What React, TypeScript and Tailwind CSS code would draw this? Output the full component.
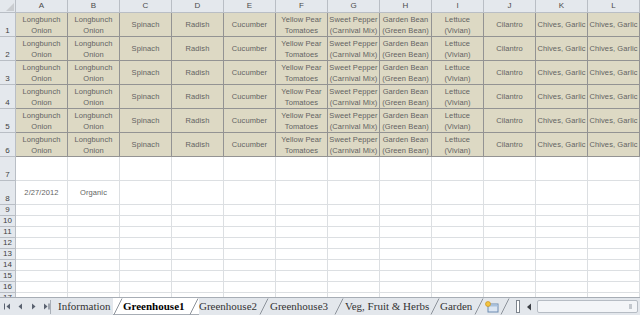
import React from "react";

const cols = ["A", "B", "C", "D", "E", "F", "G", "H", "I", "J", "K", "L"];
const plantRow: string[][] = [
  ["Longbunch", "Onion"],
  ["Longbunch", "Onion"],
  ["Spinach"],
  ["Radish"],
  ["Cucumber"],
  ["Yellow Pear", "Tomatoes"],
  ["Sweet Pepper", "(Carnival Mix)"],
  ["Garden Bean", "(Green Bean)"],
  ["Lettuce", "(Vivian)"],
  ["Cilantro"],
  ["Chives, Garlic"],
  ["Chives, Garlic"],
];

const rows: { n: number; h: string; filled: boolean; content?: string[][] }[] = [];
for (let i = 1; i <= 6; i++) rows.push({ n: i, h: "h-[24px]", filled: true, content: plantRow });
rows.push({ n: 7, h: "h-[24px]", filled: false });
rows.push({
  n: 8,
  h: "h-[24px]",
  filled: false,
  content: [["2/27/2012"], ["Organic"], [], [], [], [], [], [], [], [], [], []],
});
for (let i = 9; i <= 17; i++) rows.push({ n: i, h: "h-[11px]", filled: false });

function Slash() {
  return (
    <svg width="10" height="17" viewBox="0 0 10 17" className="shrink-0">
      <line x1="1" y1="16.5" x2="9" y2="0.5" stroke="#8d939b" strokeWidth="1" />
    </svg>
  );
}

export default function App() {
  return (
    <div
      className="w-[640px] h-[315px] overflow-hidden bg-white flex flex-col"
      style={{ fontFamily: '"Liberation Sans", Arial, sans-serif' }}
    >
      <div className="h-[297px] overflow-hidden">
        {/* header row */}
        <div className="flex h-[13px]">
          <div className="w-[16px] h-full bg-[#e4e8ed] border-r border-b border-[#b9bec5] relative">
            <svg width="8" height="8" viewBox="0 0 8 8" className="absolute right-[1px] bottom-[1px]">
              <polygon points="8,0 8,8 0,8" fill="#c9ccd0" />
            </svg>
          </div>
          {cols.map((c) => (
            <div
              key={c}
              className="w-[52px] h-full bg-[#e4e8ed] border-r border-b border-[#b9bec5] flex items-center justify-center text-[8px] text-[#4b4b4b] leading-none"
            >
              {c}
            </div>
          ))}
        </div>
        {rows.map((r) => (
          <div key={r.n} className={`flex ${r.h}`}>
            <div className="w-[16px] h-full bg-[#e4e8ed] border-r border-b border-[#b9bec5] flex items-end justify-center pb-[1px] text-[8px] text-[#3f3f3f] leading-none">
              {r.n}
            </div>
            {cols.map((c, ci) => {
              const lines = r.content ? r.content[ci] : [];
              return (
                <div
                  key={c}
                  className={`w-[52px] h-full border-r border-b flex flex-col items-center justify-center text-[7.5px] leading-[11px] text-[#636363] whitespace-nowrap tracking-[0.1px] ${
                    r.filled ? "bg-[#ddd9c4] border-[#939393]" : "bg-white border-[#dcdfe2]"
                  }`}
                >
                  {lines && lines.map((l, i) => <span key={i}>{l}</span>)}
                </div>
              );
            })}
          </div>
        ))}
      </div>
      {/* tab bar */}
      <div
        className="h-[18px] flex items-center bg-[#e3e7ec] border-t border-[#a7adb5] text-[#333]"
        style={{ fontFamily: '"Liberation Serif", "Times New Roman", serif' }}
      >
        <div className="w-[50px] h-full flex items-center gap-[6px] pl-[4px] text-[#5a6270]">
          <svg width="7" height="7" viewBox="0 0 7 7">
            <rect x="0" y="0.5" width="1" height="6" fill="#5a6270" />
            <polygon points="6,0.5 6,6.5 2.5,3.5" fill="#5a6270" />
          </svg>
          <svg width="7" height="7" viewBox="0 0 7 7">
            <polygon points="5,0.5 5,6.5 1.5,3.5" fill="#5a6270" />
          </svg>
          <svg width="7" height="7" viewBox="0 0 7 7">
            <polygon points="2,0.5 2,6.5 5.5,3.5" fill="#5a6270" />
          </svg>
          <svg width="7" height="7" viewBox="0 0 7 7">
            <polygon points="1,0.5 1,6.5 4.5,3.5" fill="#5a6270" />
            <rect x="5.5" y="0.5" width="1" height="6" fill="#5a6270" />
          </svg>
        </div>
        <div className="w-px h-[14px] bg-[#a9afb7]" />
        <div className="w-[62px] h-full flex items-center pl-[7px] text-[11px] leading-none">Information</div>
        <div className="h-full flex items-center bg-white border-b border-[#a7adb5]">
          <Slash />
          <div className="w-[66px] h-full flex items-center text-[11px] font-bold leading-none text-black">Greenhouse1</div>
          <Slash />
        </div>
        <div className="w-[60px] h-full flex items-center text-[11px] leading-none">Greenhouse2</div>
        <Slash />
        <div className="w-[65px] h-full flex items-center pl-[1px] text-[11px] leading-none">Greenhouse3</div>
        <Slash />
        <div className="w-[86px] h-full flex items-center pl-[1px] text-[11px] leading-none whitespace-nowrap">Veg, Fruit &amp; Herbs</div>
        <Slash />
        <div className="w-[34px] h-full flex items-center text-[11px] leading-none">Garden</div>
        <Slash />
        <div className="w-[16px] h-full flex items-center justify-center">
          <svg width="14" height="12" viewBox="0 0 14 12">
            <rect x="3" y="3" width="10" height="8" fill="#dbe6f3" stroke="#6d8bb0" strokeWidth="1" />
            <rect x="3.5" y="3.5" width="9" height="2" fill="#a9c1de" />
            <circle cx="3" cy="3" r="2.5" fill="#f4c542" stroke="#c48a12" strokeWidth="0.6" />
          </svg>
        </div>
        <Slash />
        <div className="w-[6px]" />
        <div className="w-[4px] h-[13px] border border-[#7d848d] bg-white" />
        <div className="w-[6px]" />
        <svg width="6" height="8" viewBox="0 0 6 8">
          <polygon points="5,0.5 5,7.5 1,4" fill="#3b3f45" />
        </svg>
        <div className="flex-1 ml-[5px] mr-[2px] h-[13px] bg-[#f3f5f8] border border-[#b6bcc4] rounded-[2px] flex items-center justify-end pr-[5px]">
          <div className="w-[3px] h-[5px] bg-[#c3c8ce]" />
        </div>
      </div>
    </div>
  );
}
